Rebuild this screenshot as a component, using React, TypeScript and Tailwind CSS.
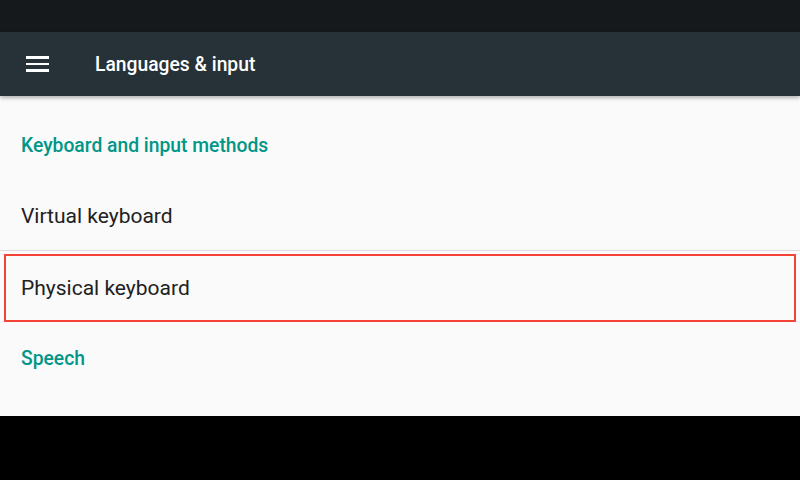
export default function App() {
  return (
    <div className="w-[800px] h-[480px] bg-black flex flex-col font-['Roboto',sans-serif]">
      <div className="h-8 bg-[#16191c]" />
      <div className="relative z-10 h-16 bg-[#263238] flex items-center shadow-[0_2px_4px_rgba(0,0,0,0.3)]">
        <div className="ml-[26px] w-[23px] flex flex-col gap-[3.6px]">
          <div className="h-[2.7px] bg-white" />
          <div className="h-[2.7px] bg-white" />
          <div className="h-[2.7px] bg-white" />
        </div>
        <span className="ml-[46px] pt-[2px] text-[19.3px] font-medium text-white">Languages &amp; input</span>
      </div>
      <div className="h-[320px] bg-[#fafafa] flex flex-col">
        <div className="h-[84px] pt-[16px] flex items-center px-[21px]">
          <span className="text-[19.3px] font-medium text-[#009688]">Keyboard and input methods</span>
        </div>
        <div className="h-[70px] pt-[3px] flex items-center px-[21px]">
          <span className="text-[21px] text-[#212121]">Virtual keyboard</span>
        </div>
        <div className="h-px bg-[#dcdcdc]" />
        <div className="px-1 py-[3px]">
          <div className="h-[68px] pt-[2px] border-2 border-[#f44336] flex items-center px-[15px]">
            <span className="text-[21px] text-[#212121]">Physical keyboard</span>
          </div>
        </div>
        <div className="h-[66px] pt-[2px] flex items-center px-[21px]">
          <span className="text-[19.3px] font-medium text-[#009688]">Speech</span>
        </div>
      </div>
    </div>
  )
}
